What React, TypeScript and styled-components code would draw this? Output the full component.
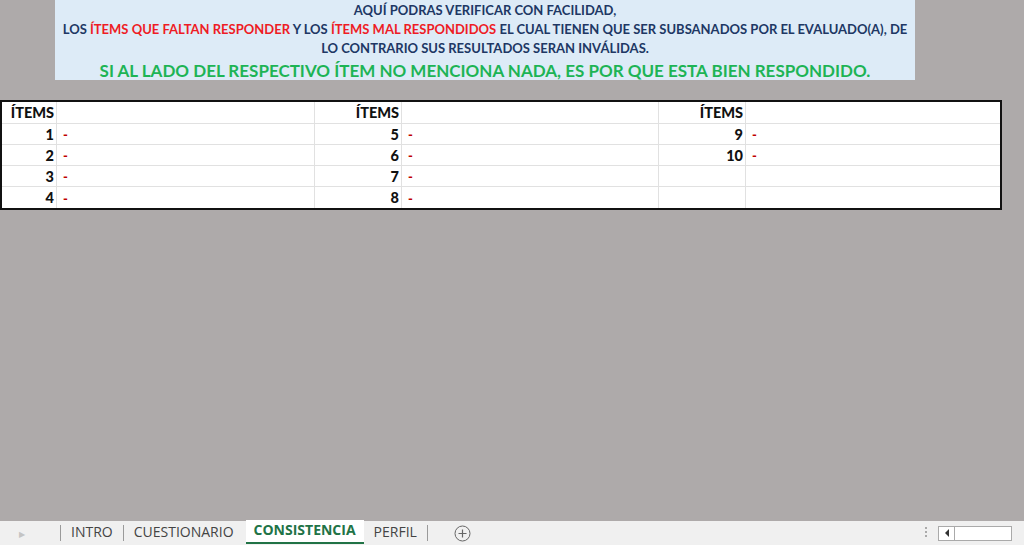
import React from 'react'
import styled, { createGlobalStyle } from 'styled-components'

const GlobalStyle = createGlobalStyle`
  html, body {
    margin: 0;
    padding: 0;
    background: #aeaaaa;
    font-family: Lato, "Open Sans", sans-serif;
  }
`

const Sheet = styled.div`
  width: 1024px;
  height: 545px;
  display: flex;
  flex-direction: column;
  background: #aeaaaa;
  overflow: hidden;
`

const Canvas = styled.div`
  flex: 1;
  display: flex;
  flex-direction: column;
`

const Notice = styled.div`
  margin-left: 55px;
  width: 860px;
  height: 80px;
  background: #ddebf7;
  display: flex;
  flex-direction: column;
  align-items: center;
  padding-top: 1px;
  box-sizing: border-box;
`

const NoticeLine = styled.div`
  font-size: 13px;
  font-weight: 700;
  line-height: 19px;
  color: #203764;
  text-align: center;
  white-space: nowrap;
`

const Red = styled.span`
  color: #ee1c25;
`

const Green = styled.div`
  font-size: 17px;
  font-weight: 700;
  line-height: 22px;
  margin-top: 2px;
  color: #1db455;
  white-space: nowrap;
`

const Grid = styled.div`
  margin-top: 20px;
  width: 1002px;
  box-sizing: border-box;
  border: 2px solid #111;
  background: #fff;
  display: grid;
  grid-template-columns: 55px 258px 87px 257px 87px 1fr;
  grid-template-rows: 22px repeat(4, 21px);
`

const Cell = styled.div<{ $last?: boolean; $bottom?: boolean }>`
  border-right: ${(p) => (p.$last ? 'none' : '1px solid #e1e1e1')};
  border-bottom: ${(p) => (p.$bottom ? 'none' : '1px solid #e1e1e1')};
  font-size: 14.5px;
  font-weight: 900;
  color: #111;
  display: flex;
  align-items: center;
  white-space: nowrap;
  overflow: hidden;
`

const Num = styled(Cell)`
  justify-content: flex-end;
  padding-right: 2px;
`

const Note = styled(Cell)`
  padding-left: 6px;
  color: #c00000;
  font-size: 13px;
`

const TabBar = styled.div`
  height: 24px;
  background: #f0f0f0;
  display: flex;
  align-items: center;
  font-family: "Open Sans", Lato, sans-serif;
  font-size: 14px;
  color: #444;
`

const Arrow = styled.div`
  width: 60px;
  padding-left: 19px;
  box-sizing: border-box;
  color: #c4c4c4;
  font-size: 8px;
`

const Sep = styled.div`
  width: 1px;
  height: 16px;
  background: #9a9a9a;
`

const Tab = styled.div<{ $active?: boolean }>`
  height: 24px;
  display: flex;
  align-items: center;
  padding: 0 ${(p) => (p.$active ? '8px' : '10px')} 4px;
  box-sizing: border-box;
  background: ${(p) => (p.$active ? '#fff' : 'transparent')};
  color: ${(p) => (p.$active ? '#217346' : '#444')};
  font-weight: ${(p) => (p.$active ? 700 : 400)};
  border-bottom: ${(p) => (p.$active ? '2px solid #217346' : 'none')};
  margin-top: ${(p) => (p.$active ? '-2px' : '0')};
  margin-left: ${(p) => (p.$active ? '2px' : '0')};
`

const Plus = styled.div`
  margin-left: 26px;
  width: 17px;
  height: 17px;
  display: flex;
  align-items: center;
  justify-content: center;
`

const Spacer = styled.div`
  flex: 1;
`

const Dots = styled.div`
  width: 2px;
  height: 12px;
  margin-right: 11px;
  background: repeating-linear-gradient(#aaa 0 2px, transparent 2px 4px);
`

const Scroll = styled.div`
  width: 74px;
  height: 15px;
  margin-right: 12px;
  border: 1px solid #aaa;
  background: #fff;
  display: flex;
  box-sizing: border-box;
`

const ScrollBtn = styled.div`
  width: 15px;
  border-right: 1px solid #aaa;
  display: flex;
  align-items: center;
  justify-content: center;
`

const rows: [string, string, string][] = [
  ['1', '5', '9'],
  ['2', '6', '10'],
  ['3', '7', ''],
  ['4', '8', ''],
]

export default function App(): React.ReactElement {
  return (
    <Sheet>
      <GlobalStyle />
      <Canvas>
        <Notice>
          <NoticeLine>AQUÍ PODRAS VERIFICAR CON FACILIDAD,</NoticeLine>
          <NoticeLine>
            LOS <Red>ÍTEMS QUE FALTAN RESPONDER</Red> Y LOS <Red>ÍTEMS MAL RESPONDIDOS</Red> EL CUAL
            TIENEN QUE SER SUBSANADOS POR EL EVALUADO(A), DE
          </NoticeLine>
          <NoticeLine>LO CONTRARIO SUS RESULTADOS SERAN INVÁLIDAS.</NoticeLine>
          <Green>SI AL LADO DEL RESPECTIVO ÍTEM NO MENCIONA NADA, ES POR QUE ESTA BIEN RESPONDIDO.</Green>
        </Notice>
        <Grid>
          {[0, 1, 2].map((i) => (
            <React.Fragment key={'h' + i}>
              <Num>ÍTEMS</Num>
              <Cell $last={i === 2} />
            </React.Fragment>
          ))}
          {rows.map((r, ri) =>
            r.map((n, ci) => (
              <React.Fragment key={ri + '-' + ci}>
                <Num $bottom={ri === 3}>{n}</Num>
                <Note $bottom={ri === 3} $last={ci === 2}>
                  {n ? '-' : ''}
                </Note>
              </React.Fragment>
            ))
          )}
        </Grid>
      </Canvas>
      <TabBar>
        <Arrow>▶</Arrow>
        <Sep />
        <Tab>INTRO</Tab>
        <Sep />
        <Tab>CUESTIONARIO</Tab>
        <Tab $active>CONSISTENCIA</Tab>
        <Tab>PERFIL</Tab>
        <Sep />
        <Plus>
          <svg width="17" height="17" viewBox="0 0 17 17">
            <circle cx="8.5" cy="8.5" r="7.5" fill="none" stroke="#666" strokeWidth="1" />
            <path d="M8.5 4.5v8M4.5 8.5h8" stroke="#666" strokeWidth="1.2" />
          </svg>
        </Plus>
        <Spacer />
        <Dots />
        <Scroll>
          <ScrollBtn>
            <svg width="6" height="8" viewBox="0 0 6 8">
              <path d="M5 0L1 4l4 4z" fill="#333" />
            </svg>
          </ScrollBtn>
        </Scroll>
      </TabBar>
    </Sheet>
  )
}
